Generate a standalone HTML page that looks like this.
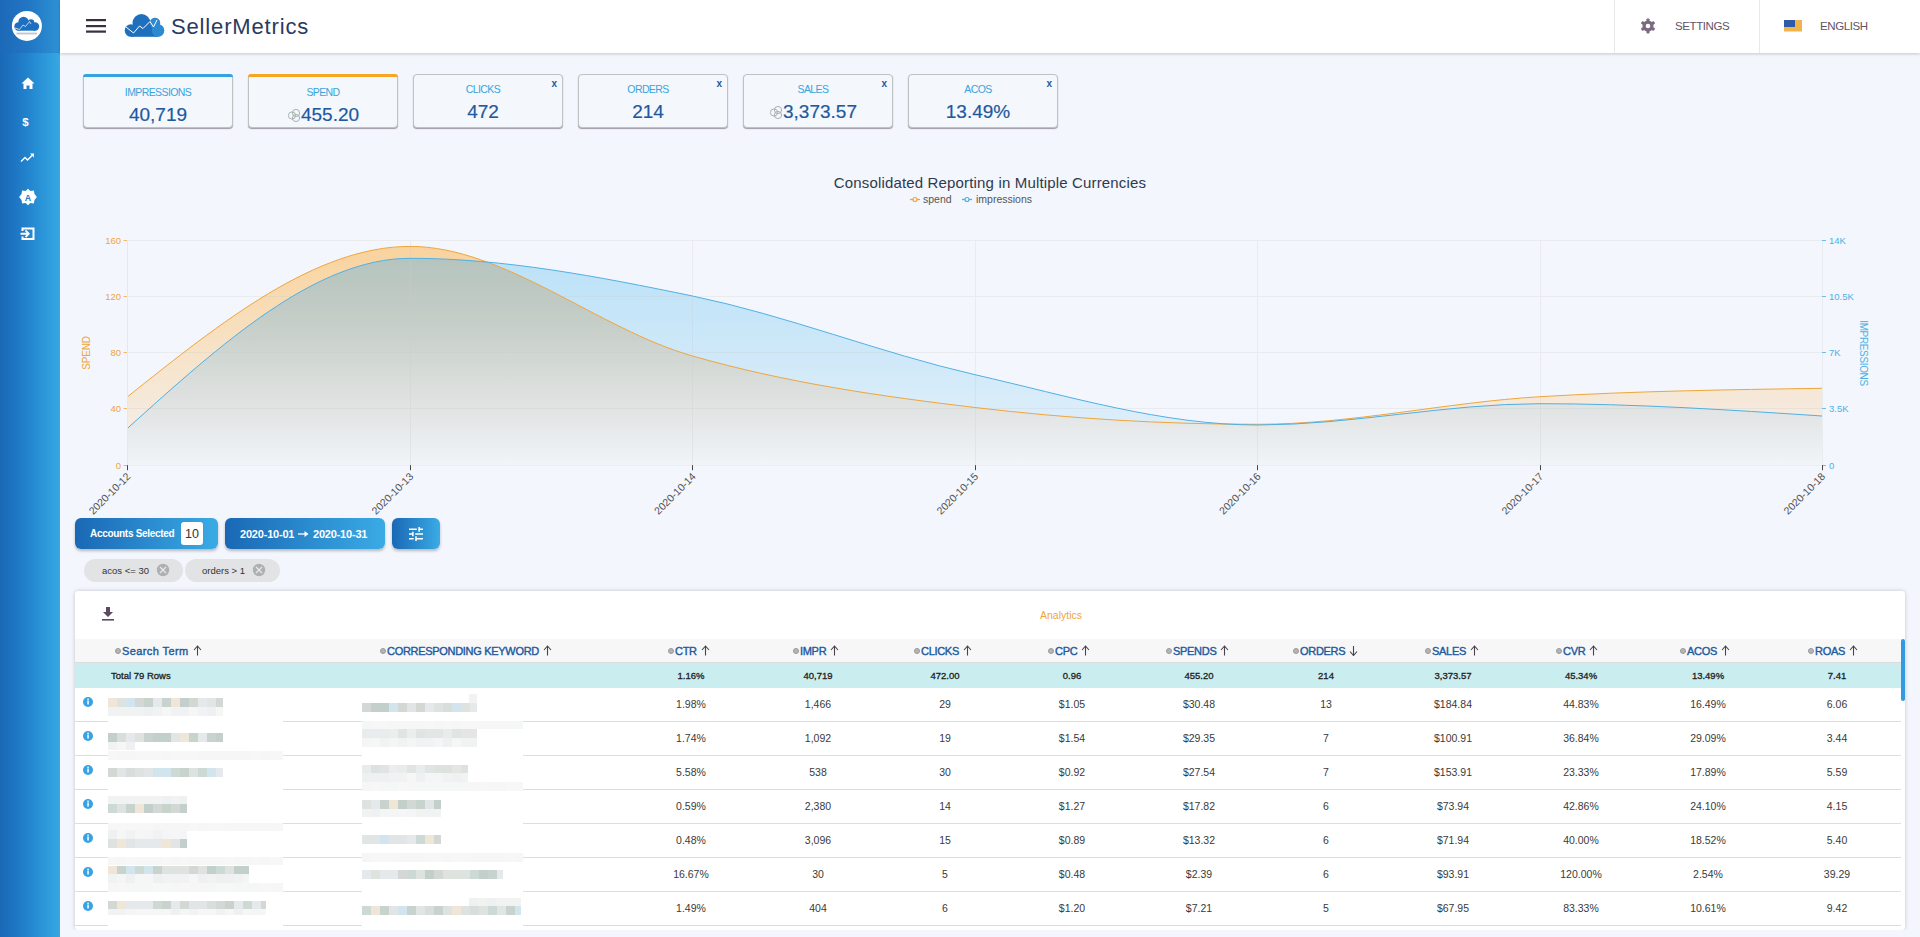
<!DOCTYPE html><html><head><meta charset="utf-8"><style>
*{margin:0;padding:0;box-sizing:border-box}
html,body{width:1920px;height:937px;overflow:hidden}
body{background:#f3f6fd;font-family:"Liberation Sans",sans-serif;position:relative;color:#333}
.abs{position:absolute}
#side{position:absolute;left:0;top:0;width:60px;height:937px;background:linear-gradient(90deg,#1a68b6 0%,#1e76c3 25%,#2386cf 50%,#2c98da 75%,#37a8e2 100%)}
#sidetop{position:absolute;left:0;top:0;width:60px;height:53px;background:linear-gradient(90deg,#1c69b8 0%,#2277c4 50%,#2d92d6 100%)}
#hdr{position:absolute;left:60px;top:0;width:1860px;height:53px;background:#fff;box-shadow:0 1px 3px rgba(0,0,0,0.2)}
.card{position:absolute;top:74px;width:150px;height:54px;background:#f4f7fc;border:1px solid #bcc4c3;border-radius:4px;box-shadow:0 1px 1px rgba(90,80,95,0.55)}
.card .lbl{position:absolute;left:0;right:0;text-align:center;font-size:10.5px;color:#3aa4dc;letter-spacing:-0.6px}
.card .val{position:absolute;left:0;right:0;text-align:center;font-size:19px;color:#1d5a9e;-webkit-text-stroke:0.2px #1d5a9e}
.card .x{position:absolute;right:5px;top:3px;font-size:10px;font-weight:bold;color:#1d5a9e}
.btn{position:absolute;top:518px;height:31px;border-radius:6px;background:linear-gradient(90deg,#1a68b5,#3aabe5);box-shadow:0 2px 3px rgba(0,0,0,0.25);color:#fff}
.chip{position:absolute;top:559px;height:23px;border-radius:12px;background:#e2e3e5;font-size:9.5px;color:#333}
.th{position:absolute;top:645px;font-size:11px;font-weight:normal;color:#1d5a9e;-webkit-text-stroke:0.4px #1d5a9e;white-space:nowrap;letter-spacing:-0.3px}
.td{position:absolute;font-size:10.5px;color:#3a3a3a;text-align:center;width:100px;white-space:nowrap}
.tt{position:absolute;top:670px;font-size:9.5px;font-weight:normal;-webkit-text-stroke:0.3px #222;color:#222;text-align:center;width:100px;white-space:nowrap}
</style></head><body>
<div id="side"></div><div id="sidetop"></div>
<svg class="abs" style="left:0;top:0" width="60" height="53" viewBox="0 0 60 53">
<circle cx="26.9" cy="25.9" r="15" fill="#fff"/>
<g fill="#1e6fbf"><circle cx="18.5" cy="26.5" r="4.2"/><circle cx="23.5" cy="22" r="5.2"/><circle cx="31" cy="22.5" r="3.2"/><circle cx="35" cy="26.5" r="4.2"/><rect x="18.5" y="24" width="16.5" height="6.7"/></g>
<path d="M15,28 L19.5,29.5 L23,25 L25.5,26.5 L29.5,21.5 L31,24" stroke="#fff" stroke-width="0.7" fill="none"/>
<rect x="16.5" y="32.6" width="20.5" height="1.8" fill="#bfc6cb"/>
</svg>
<svg class="abs" style="left:0;top:60px" width="60" height="200" viewBox="0 60 60 200">
<path d="M28,77.5 L21.5,83.5 L23.5,83.5 L23.5,89 L26.5,89 L26.5,85.5 L29.5,85.5 L29.5,89 L32.5,89 L32.5,83.5 L34.5,83.5 Z" fill="#fff"/>
<text x="25.5" y="125.5" font-size="11.5" font-weight="bold" fill="#fff" text-anchor="middle" font-family="Liberation Sans">$</text>
<path d="M20.5,161 L25,156.5 L27.5,159 L31.5,155 L30,153.5 L34,153.5 L34,157.5 L32.5,156 L27.5,161 L25,158.5 L21.5,162 Z" fill="#fff"/>
<g transform="translate(28,197) scale(1.18) translate(-28,-196.5)"><path d="M28,189.5 L30,191.5 L33,191 L33.5,194 L35.5,196.5 L33.5,199 L33,202 L30,201.5 L28,203.5 L26,201.5 L23,202 L22.5,199 L20.5,196.5 L22.5,194 L23,191 L26,191.5 Z" fill="#fff"/>
<text x="28" y="200" font-size="7.5" font-weight="bold" fill="#2178c6" text-anchor="middle" font-family="Liberation Sans">A</text></g>
<path d="M21.5,227.5 L34.5,227.5 L34.5,240 L21.5,240 L21.5,236.5 L23.5,236.5 L23.5,238 L32.5,238 L32.5,229.5 L23.5,229.5 L23.5,231 L21.5,231 Z" fill="#fff"/>
<path d="M20.5,232.8 L26.5,232.8 L24.8,231 L26.2,229.8 L30,233.8 L26.2,237.8 L24.8,236.6 L26.5,234.8 L20.5,234.8 Z" fill="#fff"/>
</svg>
<div id="hdr"></div>
<svg class="abs" style="left:80px;top:10px" width="40" height="32">
<rect x="6" y="9" width="20" height="2.2" fill="#3a2e42"/>
<rect x="6" y="15" width="20" height="2.2" fill="#3a2e42"/>
<rect x="6" y="20.5" width="20" height="2.2" fill="#3a2e42"/>
</svg>
<svg class="abs" style="left:115px;top:5px" width="60" height="40" viewBox="115 5 60 40">
<g fill="#1f6fbd"><circle cx="131" cy="30.5" r="6.3"/><circle cx="141.5" cy="23" r="9"/><circle cx="155" cy="23" r="5.2"/><circle cx="158" cy="30.5" r="6.2"/><rect x="131" y="25" width="27" height="11.8"/></g>
<g fill="#3aa0e0" opacity="0.55"><circle cx="158" cy="30.5" r="6.2"/><circle cx="155" cy="23" r="5.2"/></g>
<path d="M126,27 L133.5,33 L139.5,26 L143,28.5 L150,21.5 L153.5,27 L157,20" stroke="#fff" stroke-width="1" fill="none"/>
</svg>
<div class="abs" style="left:171px;top:14px;font-size:22px;color:#2a3a5e;letter-spacing:0.85px">SellerMetrics</div>
<div class="abs" style="left:1614px;top:0;width:1px;height:53px;background:#e6e8ea"></div>
<div class="abs" style="left:1759px;top:0;width:1px;height:53px;background:#e6e8ea"></div>
<svg class="abs" style="left:1638px;top:16px" width="20" height="20" viewBox="0 0 20 20">
<g fill="#7b6b80"><circle cx="10" cy="10" r="5.5"/>
<rect x="8.5" y="2.5" width="3" height="15" rx="0.8"/>
<rect x="8.5" y="2.5" width="3" height="15" rx="0.8" transform="rotate(60 10 10)"/>
<rect x="8.5" y="2.5" width="3" height="15" rx="0.8" transform="rotate(120 10 10)"/></g>
<circle cx="10" cy="10" r="2.3" fill="#fff"/>
</svg>
<div class="abs" style="left:1675px;top:20px;font-size:11.5px;color:#5f5566;letter-spacing:-0.4px">SETTINGS</div>
<svg class="abs" style="left:1784px;top:19px" width="19" height="14" viewBox="0 0 19 14">
<rect x="0" y="1" width="18" height="11" fill="#f0b54a"/>
<rect x="0" y="1" width="11" height="7" fill="#2d5ba8"/>
<rect x="0" y="10.5" width="18" height="2" fill="#f0b54a"/>
</svg>
<div class="abs" style="left:1820px;top:20px;font-size:11.5px;color:#5f5566;letter-spacing:-0.4px">ENGLISH</div>
<div class="card" style="left:83px">
<div class="abs" style="left:-1px;right:-1px;top:-1px;height:3px;background:#35a3e0;border-radius:3px 3px 0 0"></div>
<div class="lbl" style="top:11px;right:0px">IMPRESSIONS</div>
<div class="val" style="top:29px;right:0px">40,719</div>
</div>
<div class="card" style="left:248px">
<div class="abs" style="left:-1px;right:-1px;top:-1px;height:3px;background:#f5a623;border-radius:3px 3px 0 0"></div>
<div class="lbl" style="top:11px;right:0px">SPEND</div>
<div class="val" style="top:29px;right:0px"><svg width="14" height="14" viewBox="0 0 14 14" style="vertical-align:-1px;margin-right:0px;-webkit-text-stroke:0"><g fill="none" stroke="#a9b2b0" stroke-width="1"><circle cx="5" cy="7.5" r="3.6"/><circle cx="9" cy="5" r="3.6"/><circle cx="9" cy="10" r="3.6"/></g></svg>455.20</div>
</div>
<div class="card" style="left:413px">
<div class="lbl" style="top:8px;right:10px">CLICKS</div>
<div class="val" style="top:26px;right:10px">472</div>
<div class="x">x</div>
</div>
<div class="card" style="left:578px">
<div class="lbl" style="top:8px;right:10px">ORDERS</div>
<div class="val" style="top:26px;right:10px">214</div>
<div class="x">x</div>
</div>
<div class="card" style="left:743px">
<div class="lbl" style="top:8px;right:10px">SALES</div>
<div class="val" style="top:26px;right:10px"><svg width="14" height="14" viewBox="0 0 14 14" style="vertical-align:-1px;margin-right:0px;-webkit-text-stroke:0"><g fill="none" stroke="#a9b2b0" stroke-width="1"><circle cx="5" cy="7.5" r="3.6"/><circle cx="9" cy="5" r="3.6"/><circle cx="9" cy="10" r="3.6"/></g></svg>3,373.57</div>
<div class="x">x</div>
</div>
<div class="card" style="left:908px">
<div class="lbl" style="top:8px;right:10px">ACOS</div>
<div class="val" style="top:26px;right:10px">13.49%</div>
<div class="x">x</div>
</div>
<svg class="abs" style="left:0;top:0" width="1920" height="560" viewBox="0 0 1920 560">
<defs>
<linearGradient id="go" x1="0" y1="240.2" x2="0" y2="465.2" gradientUnits="userSpaceOnUse">
<stop offset="0" stop-color="#f9d29c"/><stop offset="0.5" stop-color="#f7e3c8"/><stop offset="1" stop-color="#f4f1f1"/></linearGradient>
<linearGradient id="gb" x1="0" y1="240.2" x2="0" y2="465.2" gradientUnits="userSpaceOnUse">
<stop offset="0" stop-color="#b8e0f7"/><stop offset="1" stop-color="#e6f1fb"/></linearGradient>
<linearGradient id="gg" x1="0" y1="240.2" x2="0" y2="465.2" gradientUnits="userSpaceOnUse">
<stop offset="0" stop-color="#b2c1bc"/><stop offset="0.35" stop-color="#c5cdc7"/><stop offset="0.75" stop-color="#e1e4e3"/><stop offset="1" stop-color="#f1f4f8"/></linearGradient>
<clipPath id="cb"><path d="M127.2,428.6 C221.5,343.5 315.8,258.3 410.1,258.3 C504.2,258.3 598.4,276.6 692.5,296.0 C786.7,315.4 880.8,353.2 975.0,374.7 C1069.2,396.2 1163.3,425.0 1257.5,425.0 C1351.7,425.0 1445.8,403.7 1540.0,403.7 C1634.0,403.7 1728.0,409.8 1822.0,416.0 L1822,465.2 L127.2,465.2 Z"/></clipPath><clipPath id="cu"><path d="M127.2,428.6 C221.5,343.5 315.8,258.3 410.1,258.3 C504.2,258.3 598.4,276.6 692.5,296.0 C786.7,315.4 880.8,353.2 975.0,374.7 C1069.2,396.2 1163.3,425.0 1257.5,425.0 C1351.7,425.0 1445.8,403.7 1540.0,403.7 C1634.0,403.7 1728.0,409.8 1822.0,416.0 L1822,465.2 L127.2,465.2 Z"/><path d="M127.2,397.0 C221.5,321.7 315.8,246.4 410.1,246.4 C504.2,246.4 598.4,329.2 692.5,356.0 C786.7,382.9 880.8,396.3 975.0,407.5 C1069.2,418.7 1163.3,424.3 1257.5,424.3 C1351.7,424.3 1445.8,402.3 1540.0,396.7 C1634.0,391.1 1728.0,389.7 1822.0,388.3 L1822,465.2 L127.2,465.2 Z"/></clipPath>
</defs>
<g stroke="#e9ebef" stroke-width="1">

<line x1="127" y1="240.5" x2="1822" y2="240.5"/>
<line x1="127" y1="296.5" x2="1822" y2="296.5"/>
<line x1="127" y1="352.5" x2="1822" y2="352.5"/>
<line x1="127" y1="408.5" x2="1822" y2="408.5"/>
<line x1="127" y1="465.5" x2="1822" y2="465.5"/>
<line x1="127.5" y1="240.2" x2="127.5" y2="465.2"/>
<line x1="410.5" y1="240.2" x2="410.5" y2="465.2"/>
<line x1="692.5" y1="240.2" x2="692.5" y2="465.2"/>
<line x1="975.5" y1="240.2" x2="975.5" y2="465.2"/>
<line x1="1257.5" y1="240.2" x2="1257.5" y2="465.2"/>
<line x1="1540.5" y1="240.2" x2="1540.5" y2="465.2"/>
<line x1="1822.5" y1="240.2" x2="1822.5" y2="465.2"/>
</g>
<path d="M127.2,397.0 C221.5,321.7 315.8,246.4 410.1,246.4 C504.2,246.4 598.4,329.2 692.5,356.0 C786.7,382.9 880.8,396.3 975.0,407.5 C1069.2,418.7 1163.3,424.3 1257.5,424.3 C1351.7,424.3 1445.8,402.3 1540.0,396.7 C1634.0,391.1 1728.0,389.7 1822.0,388.3 L1822,465.2 L127.2,465.2 Z" fill="url(#go)"/>
<path d="M127.2,428.6 C221.5,343.5 315.8,258.3 410.1,258.3 C504.2,258.3 598.4,276.6 692.5,296.0 C786.7,315.4 880.8,353.2 975.0,374.7 C1069.2,396.2 1163.3,425.0 1257.5,425.0 C1351.7,425.0 1445.8,403.7 1540.0,403.7 C1634.0,403.7 1728.0,409.8 1822.0,416.0 L1822,465.2 L127.2,465.2 Z" fill="url(#gb)"/>
<path d="M127.2,397.0 C221.5,321.7 315.8,246.4 410.1,246.4 C504.2,246.4 598.4,329.2 692.5,356.0 C786.7,382.9 880.8,396.3 975.0,407.5 C1069.2,418.7 1163.3,424.3 1257.5,424.3 C1351.7,424.3 1445.8,402.3 1540.0,396.7 C1634.0,391.1 1728.0,389.7 1822.0,388.3 L1822,465.2 L127.2,465.2 Z" fill="url(#gg)" clip-path="url(#cb)"/>
<g stroke="#c8ccce" stroke-width="1" opacity="0.3" clip-path="url(#cu)">
<line x1="127" y1="296.5" x2="1822" y2="296.5"/>
<line x1="127" y1="352.5" x2="1822" y2="352.5"/>
<line x1="127" y1="408.5" x2="1822" y2="408.5"/>
<line x1="410.5" y1="240.2" x2="410.5" y2="465.2"/>
<line x1="692.5" y1="240.2" x2="692.5" y2="465.2"/>
<line x1="975.5" y1="240.2" x2="975.5" y2="465.2"/>
<line x1="1257.5" y1="240.2" x2="1257.5" y2="465.2"/>
<line x1="1540.5" y1="240.2" x2="1540.5" y2="465.2"/>
</g>
<path d="M127.2,397.0 C221.5,321.7 315.8,246.4 410.1,246.4 C504.2,246.4 598.4,329.2 692.5,356.0 C786.7,382.9 880.8,396.3 975.0,407.5 C1069.2,418.7 1163.3,424.3 1257.5,424.3 C1351.7,424.3 1445.8,402.3 1540.0,396.7 C1634.0,391.1 1728.0,389.7 1822.0,388.3" fill="none" stroke="#f0a53a" stroke-width="1"/>
<path d="M127.2,428.6 C221.5,343.5 315.8,258.3 410.1,258.3 C504.2,258.3 598.4,276.6 692.5,296.0 C786.7,315.4 880.8,353.2 975.0,374.7 C1069.2,396.2 1163.3,425.0 1257.5,425.0 C1351.7,425.0 1445.8,403.7 1540.0,403.7 C1634.0,403.7 1728.0,409.8 1822.0,416.0" fill="none" stroke="#4fb0e3" stroke-width="1"/>
<line x1="123.5" y1="240.5" x2="127" y2="240.5" stroke="#f3b76a" stroke-width="1"/>
<text x="121" y="243.7" font-size="9.5" fill="#f0a53a" text-anchor="end" font-family="Liberation Sans">160</text>
<line x1="1822" y1="240.5" x2="1826" y2="240.5" stroke="#6cbde8" stroke-width="1"/>
<text x="1829" y="243.7" font-size="9.5" fill="#4fb0e3" font-family="Liberation Sans">14K</text>
<line x1="123.5" y1="296.5" x2="127" y2="296.5" stroke="#f3b76a" stroke-width="1"/>
<text x="121" y="299.9" font-size="9.5" fill="#f0a53a" text-anchor="end" font-family="Liberation Sans">120</text>
<line x1="1822" y1="296.5" x2="1826" y2="296.5" stroke="#6cbde8" stroke-width="1"/>
<text x="1829" y="299.9" font-size="9.5" fill="#4fb0e3" font-family="Liberation Sans">10.5K</text>
<line x1="123.5" y1="352.5" x2="127" y2="352.5" stroke="#f3b76a" stroke-width="1"/>
<text x="121" y="356.2" font-size="9.5" fill="#f0a53a" text-anchor="end" font-family="Liberation Sans">80</text>
<line x1="1822" y1="352.5" x2="1826" y2="352.5" stroke="#6cbde8" stroke-width="1"/>
<text x="1829" y="356.2" font-size="9.5" fill="#4fb0e3" font-family="Liberation Sans">7K</text>
<line x1="123.5" y1="408.5" x2="127" y2="408.5" stroke="#f3b76a" stroke-width="1"/>
<text x="121" y="412.4" font-size="9.5" fill="#f0a53a" text-anchor="end" font-family="Liberation Sans">40</text>
<line x1="1822" y1="408.5" x2="1826" y2="408.5" stroke="#6cbde8" stroke-width="1"/>
<text x="1829" y="412.4" font-size="9.5" fill="#4fb0e3" font-family="Liberation Sans">3.5K</text>
<line x1="123.5" y1="465.5" x2="127" y2="465.5" stroke="#f3b76a" stroke-width="1"/>
<text x="121" y="468.7" font-size="9.5" fill="#f0a53a" text-anchor="end" font-family="Liberation Sans">0</text>
<line x1="1822" y1="465.5" x2="1826" y2="465.5" stroke="#6cbde8" stroke-width="1"/>
<text x="1829" y="468.7" font-size="9.5" fill="#4fb0e3" font-family="Liberation Sans">0</text>
<line x1="127.5" y1="240.2" x2="127.5" y2="465.2" stroke="#e6e8ec"/>
<line x1="127.5" y1="465.2" x2="127.5" y2="470.2" stroke="#444" stroke-width="1"/>
<text transform="translate(131.2,477.2) rotate(-45)" font-size="10.5" fill="#505050" text-anchor="end" font-family="Liberation Sans">2020-10-12</text>
<line x1="410.5" y1="465.2" x2="410.5" y2="470.2" stroke="#444" stroke-width="1"/>
<text transform="translate(414.1,477.2) rotate(-45)" font-size="10.5" fill="#505050" text-anchor="end" font-family="Liberation Sans">2020-10-13</text>
<line x1="692.5" y1="465.2" x2="692.5" y2="470.2" stroke="#444" stroke-width="1"/>
<text transform="translate(696.5,477.2) rotate(-45)" font-size="10.5" fill="#505050" text-anchor="end" font-family="Liberation Sans">2020-10-14</text>
<line x1="975.5" y1="465.2" x2="975.5" y2="470.2" stroke="#444" stroke-width="1"/>
<text transform="translate(979,477.2) rotate(-45)" font-size="10.5" fill="#505050" text-anchor="end" font-family="Liberation Sans">2020-10-15</text>
<line x1="1257.5" y1="465.2" x2="1257.5" y2="470.2" stroke="#444" stroke-width="1"/>
<text transform="translate(1261.5,477.2) rotate(-45)" font-size="10.5" fill="#505050" text-anchor="end" font-family="Liberation Sans">2020-10-16</text>
<line x1="1540.5" y1="465.2" x2="1540.5" y2="470.2" stroke="#444" stroke-width="1"/>
<text transform="translate(1544,477.2) rotate(-45)" font-size="10.5" fill="#505050" text-anchor="end" font-family="Liberation Sans">2020-10-17</text>
<line x1="1822.5" y1="465.2" x2="1822.5" y2="470.2" stroke="#444" stroke-width="1"/>
<text transform="translate(1826,477.2) rotate(-45)" font-size="10.5" fill="#505050" text-anchor="end" font-family="Liberation Sans">2020-10-18</text>
<text transform="translate(90,353) rotate(-90)" font-size="10" letter-spacing="-0.2" fill="#f0a53a" text-anchor="middle" font-family="Liberation Sans">SPEND</text>
<text transform="translate(1860,353) rotate(90)" font-size="10" letter-spacing="-0.35" fill="#4fb0e3" text-anchor="middle" font-family="Liberation Sans">IMPRESSIONS</text>
<text x="990" y="188" font-size="15" letter-spacing="0.16" fill="#2f3a4c" text-anchor="middle" font-family="Liberation Sans">Consolidated Reporting in Multiple Currencies</text>
<line x1="910" y1="199.5" x2="920" y2="199.5" stroke="#f0a53a" stroke-width="1.3"/><circle cx="915" cy="199.5" r="2" fill="#f3f6fd" stroke="#f0a53a" stroke-width="1.2"/>
<text x="923" y="203" font-size="10.5" fill="#555" font-family="Liberation Sans">spend</text>
<line x1="962" y1="199.5" x2="972" y2="199.5" stroke="#4fb0e3" stroke-width="1.3"/><circle cx="967" cy="199.5" r="2" fill="#f3f6fd" stroke="#4fb0e3" stroke-width="1.2"/>
<text x="976" y="203" font-size="10.5" fill="#555" font-family="Liberation Sans">impressions</text>
</svg>
<div class="btn" style="left:75px;width:143px"><div class="abs" style="left:15px;top:10px;font-size:10px;font-weight:bold;letter-spacing:-0.3px">Accounts Selected</div><div class="abs" style="left:181px;"></div><div class="abs" style="left:106px;top:4px;width:22px;height:23px;padding-top:1px;background:#fff;border-radius:3px;color:#333;font-size:12.5px;text-align:center;line-height:23px">10</div></div>
<div class="btn" style="left:225px;width:160px"><div class="abs" style="left:15px;top:10px;font-size:11px;font-weight:bold;white-space:nowrap;letter-spacing:-0.2px">2020-10-01 <svg width="11" height="8" viewBox="0 0 11 8" style="vertical-align:0px;margin:0 1px"><path d="M0,4 L9,4" stroke="#fff" stroke-width="1.3"/><path d="M6.5,1 L10.5,4 L6.5,7 Z" fill="#fff"/></svg> 2020-10-31</div></div>
<div class="btn" style="left:392px;width:48px"><svg class="abs" style="left:17px;top:8.5px" width="14" height="14" viewBox="3 3 18 18"><path fill="#fff" d="M3 17v2h6v-2H3zM3 5v2h10V5H3zm10 16v-2h8v-2h-8v-2h-2v6h2zM7 9v2H3v2h4v2h2V9H7zm14 4v-2H11v2h10zm-6-4h2V7h4V5h-4V3h-2v6z"/></svg></div>
<div class="chip" style="left:84px;width:99px"><div class="abs" style="left:18px;top:6px">acos &lt;= 30</div><svg class="abs" style="left:71px;top:3px" width="16" height="16" viewBox="0 0 16 16"><circle cx="8" cy="8" r="6.2" fill="#b0b0b3"/><g stroke="#e8e8ea" stroke-width="1.2"><line x1="5" y1="5" x2="11" y2="11"/><line x1="11" y1="5" x2="5" y2="11"/></g></svg></div>
<div class="chip" style="left:185px;width:95px"><div class="abs" style="left:17px;top:6px">orders &gt; 1</div><svg class="abs" style="left:66px;top:3px" width="16" height="16" viewBox="0 0 16 16"><circle cx="8" cy="8" r="6.2" fill="#b0b0b3"/><g stroke="#e8e8ea" stroke-width="1.2"><line x1="5" y1="5" x2="11" y2="11"/><line x1="11" y1="5" x2="5" y2="11"/></g></svg></div>
<div class="abs" style="left:75px;top:591px;width:1830px;height:339px;background:#fff;box-shadow:0 0 4px rgba(0,0,0,0.2);border-radius:3px"></div>
<svg class="abs" style="left:101px;top:606px" width="14" height="16" viewBox="0 0 14 16"><path d="M5,1 L9,1 L9,6 L12,6 L7,11 L2,6 L5,6 Z" fill="#5a4a62"/><rect x="1" y="13" width="12" height="1.6" fill="#5a4a62"/></svg>
<div class="abs" style="left:1000px;top:609px;width:122px;text-align:center;font-size:10.5px;color:#f0a53a">Analytics</div>
<div class="abs" style="left:75px;top:639px;width:1826px;height:24px;background:#f7f7f8;border-bottom:1px solid #dcdddf"></div>
<div class="abs" style="left:75px;top:663px;width:1826px;height:25px;background:#caedef"></div>
<div class="abs" style="left:1901px;top:639px;width:4px;height:62px;background:#3399e0;border-radius:2px"></div>
<div class="th" style="left:115px;letter-spacing:0.4px;"><span style="display:inline-block;width:6px;height:6px;border-radius:3px;background:#b5b5b5;border:1px solid #999;-webkit-text-stroke:0;margin-right:1px;vertical-align:1px"></span>Search Term<svg width="9" height="11" viewBox="0 0 9 11" style="vertical-align:-1px;margin-left:4px"><g stroke="#4a4050" stroke-width="1.1" fill="none"><path d="M4.5,10.5 L4.5,1 M1,5 L4.5,1 L8,5"/></g></svg></div>
<div class="th" style="left:380px;"><span style="display:inline-block;width:6px;height:6px;border-radius:3px;background:#b5b5b5;border:1px solid #999;-webkit-text-stroke:0;margin-right:1px;vertical-align:1px"></span>CORRESPONDING KEYWORD<svg width="9" height="11" viewBox="0 0 9 11" style="vertical-align:-1px;margin-left:4px"><g stroke="#4a4050" stroke-width="1.1" fill="none"><path d="M4.5,10.5 L4.5,1 M1,5 L4.5,1 L8,5"/></g></svg></div>
<div class="th" style="left:668px;"><span style="display:inline-block;width:6px;height:6px;border-radius:3px;background:#b5b5b5;border:1px solid #999;-webkit-text-stroke:0;margin-right:1px;vertical-align:1px"></span>CTR<svg width="9" height="11" viewBox="0 0 9 11" style="vertical-align:-1px;margin-left:4px"><g stroke="#4a4050" stroke-width="1.1" fill="none"><path d="M4.5,10.5 L4.5,1 M1,5 L4.5,1 L8,5"/></g></svg></div>
<div class="th" style="left:793px;"><span style="display:inline-block;width:6px;height:6px;border-radius:3px;background:#b5b5b5;border:1px solid #999;-webkit-text-stroke:0;margin-right:1px;vertical-align:1px"></span>IMPR<svg width="9" height="11" viewBox="0 0 9 11" style="vertical-align:-1px;margin-left:4px"><g stroke="#4a4050" stroke-width="1.1" fill="none"><path d="M4.5,10.5 L4.5,1 M1,5 L4.5,1 L8,5"/></g></svg></div>
<div class="th" style="left:914px;"><span style="display:inline-block;width:6px;height:6px;border-radius:3px;background:#b5b5b5;border:1px solid #999;-webkit-text-stroke:0;margin-right:1px;vertical-align:1px"></span>CLICKS<svg width="9" height="11" viewBox="0 0 9 11" style="vertical-align:-1px;margin-left:4px"><g stroke="#4a4050" stroke-width="1.1" fill="none"><path d="M4.5,10.5 L4.5,1 M1,5 L4.5,1 L8,5"/></g></svg></div>
<div class="th" style="left:1048px;"><span style="display:inline-block;width:6px;height:6px;border-radius:3px;background:#b5b5b5;border:1px solid #999;-webkit-text-stroke:0;margin-right:1px;vertical-align:1px"></span>CPC<svg width="9" height="11" viewBox="0 0 9 11" style="vertical-align:-1px;margin-left:4px"><g stroke="#4a4050" stroke-width="1.1" fill="none"><path d="M4.5,10.5 L4.5,1 M1,5 L4.5,1 L8,5"/></g></svg></div>
<div class="th" style="left:1166px;"><span style="display:inline-block;width:6px;height:6px;border-radius:3px;background:#b5b5b5;border:1px solid #999;-webkit-text-stroke:0;margin-right:1px;vertical-align:1px"></span>SPENDS<svg width="9" height="11" viewBox="0 0 9 11" style="vertical-align:-1px;margin-left:4px"><g stroke="#4a4050" stroke-width="1.1" fill="none"><path d="M4.5,10.5 L4.5,1 M1,5 L4.5,1 L8,5"/></g></svg></div>
<div class="th" style="left:1293px;"><span style="display:inline-block;width:6px;height:6px;border-radius:3px;background:#b5b5b5;border:1px solid #999;-webkit-text-stroke:0;margin-right:1px;vertical-align:1px"></span>ORDERS<svg width="9" height="11" viewBox="0 0 9 11" style="vertical-align:-1px;margin-left:4px"><g stroke="#4a4050" stroke-width="1.1" fill="none"><path d="M4.5,1 L4.5,10.5 M1,6.5 L4.5,10.5 L8,6.5"/></g></svg></div>
<div class="th" style="left:1425px;"><span style="display:inline-block;width:6px;height:6px;border-radius:3px;background:#b5b5b5;border:1px solid #999;-webkit-text-stroke:0;margin-right:1px;vertical-align:1px"></span>SALES<svg width="9" height="11" viewBox="0 0 9 11" style="vertical-align:-1px;margin-left:4px"><g stroke="#4a4050" stroke-width="1.1" fill="none"><path d="M4.5,10.5 L4.5,1 M1,5 L4.5,1 L8,5"/></g></svg></div>
<div class="th" style="left:1556px;"><span style="display:inline-block;width:6px;height:6px;border-radius:3px;background:#b5b5b5;border:1px solid #999;-webkit-text-stroke:0;margin-right:1px;vertical-align:1px"></span>CVR<svg width="9" height="11" viewBox="0 0 9 11" style="vertical-align:-1px;margin-left:4px"><g stroke="#4a4050" stroke-width="1.1" fill="none"><path d="M4.5,10.5 L4.5,1 M1,5 L4.5,1 L8,5"/></g></svg></div>
<div class="th" style="left:1680px;"><span style="display:inline-block;width:6px;height:6px;border-radius:3px;background:#b5b5b5;border:1px solid #999;-webkit-text-stroke:0;margin-right:1px;vertical-align:1px"></span>ACOS<svg width="9" height="11" viewBox="0 0 9 11" style="vertical-align:-1px;margin-left:4px"><g stroke="#4a4050" stroke-width="1.1" fill="none"><path d="M4.5,10.5 L4.5,1 M1,5 L4.5,1 L8,5"/></g></svg></div>
<div class="th" style="left:1808px;"><span style="display:inline-block;width:6px;height:6px;border-radius:3px;background:#b5b5b5;border:1px solid #999;-webkit-text-stroke:0;margin-right:1px;vertical-align:1px"></span>ROAS<svg width="9" height="11" viewBox="0 0 9 11" style="vertical-align:-1px;margin-left:4px"><g stroke="#4a4050" stroke-width="1.1" fill="none"><path d="M4.5,10.5 L4.5,1 M1,5 L4.5,1 L8,5"/></g></svg></div>
<div class="abs" style="left:111px;top:670px;font-size:9.5px;font-weight:normal;-webkit-text-stroke:0.3px #222;color:#222">Total 79 Rows</div>
<div class="tt" style="left:641px">1.16%</div>
<div class="tt" style="left:768px">40,719</div>
<div class="tt" style="left:895px">472.00</div>
<div class="tt" style="left:1022px">0.96</div>
<div class="tt" style="left:1149px">455.20</div>
<div class="tt" style="left:1276px">214</div>
<div class="tt" style="left:1403px">3,373.57</div>
<div class="tt" style="left:1531px">45.34%</div>
<div class="tt" style="left:1658px">13.49%</div>
<div class="tt" style="left:1787px">7.41</div>
<div class="abs" style="left:75px;top:721px;width:1826px;height:1px;background:#dcdee0"></div>
<svg class="abs" style="left:82px;top:696px" width="12" height="12" viewBox="0 0 12 12"><circle cx="6" cy="6" r="5" fill="#38a2e4"/><rect x="5.3" y="4.5" width="1.5" height="4" fill="#fff"/><rect x="5.3" y="2.6" width="1.5" height="1.3" fill="#fff"/></svg>
<div class="td" style="left:641px;top:698px">1.98%</div>
<div class="td" style="left:768px;top:698px">1,466</div>
<div class="td" style="left:895px;top:698px">29</div>
<div class="td" style="left:1022px;top:698px">$1.05</div>
<div class="td" style="left:1149px;top:698px">$30.48</div>
<div class="td" style="left:1276px;top:698px">13</div>
<div class="td" style="left:1403px;top:698px">$184.84</div>
<div class="td" style="left:1531px;top:698px">44.83%</div>
<div class="td" style="left:1658px;top:698px">16.49%</div>
<div class="td" style="left:1787px;top:698px">6.06</div>
<div class="abs" style="left:75px;top:755px;width:1826px;height:1px;background:#dcdee0"></div>
<svg class="abs" style="left:82px;top:730px" width="12" height="12" viewBox="0 0 12 12"><circle cx="6" cy="6" r="5" fill="#38a2e4"/><rect x="5.3" y="4.5" width="1.5" height="4" fill="#fff"/><rect x="5.3" y="2.6" width="1.5" height="1.3" fill="#fff"/></svg>
<div class="td" style="left:641px;top:732px">1.74%</div>
<div class="td" style="left:768px;top:732px">1,092</div>
<div class="td" style="left:895px;top:732px">19</div>
<div class="td" style="left:1022px;top:732px">$1.54</div>
<div class="td" style="left:1149px;top:732px">$29.35</div>
<div class="td" style="left:1276px;top:732px">7</div>
<div class="td" style="left:1403px;top:732px">$100.91</div>
<div class="td" style="left:1531px;top:732px">36.84%</div>
<div class="td" style="left:1658px;top:732px">29.09%</div>
<div class="td" style="left:1787px;top:732px">3.44</div>
<div class="abs" style="left:75px;top:789px;width:1826px;height:1px;background:#dcdee0"></div>
<svg class="abs" style="left:82px;top:764px" width="12" height="12" viewBox="0 0 12 12"><circle cx="6" cy="6" r="5" fill="#38a2e4"/><rect x="5.3" y="4.5" width="1.5" height="4" fill="#fff"/><rect x="5.3" y="2.6" width="1.5" height="1.3" fill="#fff"/></svg>
<div class="td" style="left:641px;top:766px">5.58%</div>
<div class="td" style="left:768px;top:766px">538</div>
<div class="td" style="left:895px;top:766px">30</div>
<div class="td" style="left:1022px;top:766px">$0.92</div>
<div class="td" style="left:1149px;top:766px">$27.54</div>
<div class="td" style="left:1276px;top:766px">7</div>
<div class="td" style="left:1403px;top:766px">$153.91</div>
<div class="td" style="left:1531px;top:766px">23.33%</div>
<div class="td" style="left:1658px;top:766px">17.89%</div>
<div class="td" style="left:1787px;top:766px">5.59</div>
<div class="abs" style="left:75px;top:823px;width:1826px;height:1px;background:#dcdee0"></div>
<svg class="abs" style="left:82px;top:798px" width="12" height="12" viewBox="0 0 12 12"><circle cx="6" cy="6" r="5" fill="#38a2e4"/><rect x="5.3" y="4.5" width="1.5" height="4" fill="#fff"/><rect x="5.3" y="2.6" width="1.5" height="1.3" fill="#fff"/></svg>
<div class="td" style="left:641px;top:800px">0.59%</div>
<div class="td" style="left:768px;top:800px">2,380</div>
<div class="td" style="left:895px;top:800px">14</div>
<div class="td" style="left:1022px;top:800px">$1.27</div>
<div class="td" style="left:1149px;top:800px">$17.82</div>
<div class="td" style="left:1276px;top:800px">6</div>
<div class="td" style="left:1403px;top:800px">$73.94</div>
<div class="td" style="left:1531px;top:800px">42.86%</div>
<div class="td" style="left:1658px;top:800px">24.10%</div>
<div class="td" style="left:1787px;top:800px">4.15</div>
<div class="abs" style="left:75px;top:857px;width:1826px;height:1px;background:#dcdee0"></div>
<svg class="abs" style="left:82px;top:832px" width="12" height="12" viewBox="0 0 12 12"><circle cx="6" cy="6" r="5" fill="#38a2e4"/><rect x="5.3" y="4.5" width="1.5" height="4" fill="#fff"/><rect x="5.3" y="2.6" width="1.5" height="1.3" fill="#fff"/></svg>
<div class="td" style="left:641px;top:834px">0.48%</div>
<div class="td" style="left:768px;top:834px">3,096</div>
<div class="td" style="left:895px;top:834px">15</div>
<div class="td" style="left:1022px;top:834px">$0.89</div>
<div class="td" style="left:1149px;top:834px">$13.32</div>
<div class="td" style="left:1276px;top:834px">6</div>
<div class="td" style="left:1403px;top:834px">$71.94</div>
<div class="td" style="left:1531px;top:834px">40.00%</div>
<div class="td" style="left:1658px;top:834px">18.52%</div>
<div class="td" style="left:1787px;top:834px">5.40</div>
<div class="abs" style="left:75px;top:891px;width:1826px;height:1px;background:#dcdee0"></div>
<svg class="abs" style="left:82px;top:866px" width="12" height="12" viewBox="0 0 12 12"><circle cx="6" cy="6" r="5" fill="#38a2e4"/><rect x="5.3" y="4.5" width="1.5" height="4" fill="#fff"/><rect x="5.3" y="2.6" width="1.5" height="1.3" fill="#fff"/></svg>
<div class="td" style="left:641px;top:868px">16.67%</div>
<div class="td" style="left:768px;top:868px">30</div>
<div class="td" style="left:895px;top:868px">5</div>
<div class="td" style="left:1022px;top:868px">$0.48</div>
<div class="td" style="left:1149px;top:868px">$2.39</div>
<div class="td" style="left:1276px;top:868px">6</div>
<div class="td" style="left:1403px;top:868px">$93.91</div>
<div class="td" style="left:1531px;top:868px">120.00%</div>
<div class="td" style="left:1658px;top:868px">2.54%</div>
<div class="td" style="left:1787px;top:868px">39.29</div>
<div class="abs" style="left:75px;top:925px;width:1826px;height:1px;background:#dcdee0"></div>
<svg class="abs" style="left:82px;top:900px" width="12" height="12" viewBox="0 0 12 12"><circle cx="6" cy="6" r="5" fill="#38a2e4"/><rect x="5.3" y="4.5" width="1.5" height="4" fill="#fff"/><rect x="5.3" y="2.6" width="1.5" height="1.3" fill="#fff"/></svg>
<div class="td" style="left:641px;top:902px">1.49%</div>
<div class="td" style="left:768px;top:902px">404</div>
<div class="td" style="left:895px;top:902px">6</div>
<div class="td" style="left:1022px;top:902px">$1.20</div>
<div class="td" style="left:1149px;top:902px">$7.21</div>
<div class="td" style="left:1276px;top:902px">5</div>
<div class="td" style="left:1403px;top:902px">$67.95</div>
<div class="td" style="left:1531px;top:902px">83.33%</div>
<div class="td" style="left:1658px;top:902px">10.61%</div>
<div class="td" style="left:1787px;top:902px">9.42</div>
<div class="abs" style="left:108px;top:720px;width:175px;height:3px;background:#fff"></div>
<div class="abs" style="left:362px;top:720px;width:161px;height:3px;background:#fff"></div>
<div class="abs" style="left:108px;top:754px;width:175px;height:3px;background:#fff"></div>
<div class="abs" style="left:362px;top:754px;width:161px;height:3px;background:#fff"></div>
<div class="abs" style="left:108px;top:788px;width:175px;height:3px;background:#fff"></div>
<div class="abs" style="left:362px;top:788px;width:161px;height:3px;background:#fff"></div>
<div class="abs" style="left:108px;top:822px;width:175px;height:3px;background:#fff"></div>
<div class="abs" style="left:362px;top:822px;width:161px;height:3px;background:#fff"></div>
<div class="abs" style="left:108px;top:856px;width:175px;height:3px;background:#fff"></div>
<div class="abs" style="left:362px;top:856px;width:161px;height:3px;background:#fff"></div>
<div class="abs" style="left:108px;top:890px;width:175px;height:3px;background:#fff"></div>
<div class="abs" style="left:362px;top:890px;width:161px;height:3px;background:#fff"></div>
<div class="abs" style="left:108px;top:924px;width:175px;height:3px;background:#fff"></div>
<div class="abs" style="left:362px;top:924px;width:161px;height:3px;background:#fff"></div>
<div class="abs" style="left:108px;top:698px;width:9px;height:9px;background:#efe6d8"></div>
<div class="abs" style="left:117px;top:698px;width:9px;height:9px;background:#dfe3e0"></div>
<div class="abs" style="left:126px;top:698px;width:9px;height:9px;background:#d2e4ee"></div>
<div class="abs" style="left:135px;top:698px;width:9px;height:9px;background:#d3d8d4"></div>
<div class="abs" style="left:144px;top:698px;width:9px;height:9px;background:#c9d3cd"></div>
<div class="abs" style="left:153px;top:698px;width:9px;height:9px;background:#e6e9eb"></div>
<div class="abs" style="left:162px;top:698px;width:9px;height:9px;background:#c9d3cd"></div>
<div class="abs" style="left:171px;top:698px;width:9px;height:9px;background:#efe6d8"></div>
<div class="abs" style="left:180px;top:698px;width:9px;height:9px;background:#c3cfca"></div>
<div class="abs" style="left:189px;top:698px;width:9px;height:9px;background:#d3d8d4"></div>
<div class="abs" style="left:198px;top:698px;width:9px;height:9px;background:#e6e9eb"></div>
<div class="abs" style="left:207px;top:698px;width:9px;height:9px;background:#e2e5e6"></div>
<div class="abs" style="left:216px;top:698px;width:7px;height:9px;background:#d3d8d4"></div>
<div class="abs" style="left:108px;top:707px;width:9px;height:9px;background:#f0f2f3"></div>
<div class="abs" style="left:117px;top:707px;width:9px;height:9px;background:#f1f3f3"></div>
<div class="abs" style="left:126px;top:707px;width:9px;height:9px;background:#f1f3f3"></div>
<div class="abs" style="left:135px;top:707px;width:9px;height:9px;background:#f0f2f3"></div>
<div class="abs" style="left:144px;top:707px;width:9px;height:9px;background:#eef0f2"></div>
<div class="abs" style="left:153px;top:707px;width:9px;height:9px;background:#f0f2f3"></div>
<div class="abs" style="left:162px;top:707px;width:9px;height:9px;background:#f6f6f7"></div>
<div class="abs" style="left:171px;top:707px;width:9px;height:9px;background:#f1f3f3"></div>
<div class="abs" style="left:180px;top:707px;width:9px;height:9px;background:#f0f2f3"></div>
<div class="abs" style="left:189px;top:707px;width:9px;height:9px;background:#f6f6f7"></div>
<div class="abs" style="left:198px;top:707px;width:9px;height:9px;background:#f0f2f3"></div>
<div class="abs" style="left:207px;top:707px;width:9px;height:9px;background:#eef0f2"></div>
<div class="abs" style="left:216px;top:707px;width:7px;height:9px;background:#f6f6f7"></div>
<div class="abs" style="left:362px;top:703px;width:9px;height:9px;background:#d3d8d4"></div>
<div class="abs" style="left:371px;top:703px;width:9px;height:9px;background:#c3cfca"></div>
<div class="abs" style="left:380px;top:703px;width:9px;height:9px;background:#c3cfca"></div>
<div class="abs" style="left:389px;top:703px;width:9px;height:9px;background:#d2e4ee"></div>
<div class="abs" style="left:398px;top:703px;width:9px;height:9px;background:#d3d8d4"></div>
<div class="abs" style="left:407px;top:703px;width:9px;height:9px;background:#e2e5e6"></div>
<div class="abs" style="left:416px;top:703px;width:9px;height:9px;background:#d3d8d4"></div>
<div class="abs" style="left:425px;top:703px;width:9px;height:9px;background:#e6e9eb"></div>
<div class="abs" style="left:434px;top:703px;width:9px;height:9px;background:#dfe3e0"></div>
<div class="abs" style="left:443px;top:703px;width:9px;height:9px;background:#d8dedb"></div>
<div class="abs" style="left:452px;top:703px;width:9px;height:9px;background:#d2e4ee"></div>
<div class="abs" style="left:461px;top:703px;width:9px;height:9px;background:#dfe3e0"></div>
<div class="abs" style="left:470px;top:703px;width:7px;height:9px;background:#e6e9eb"></div>
<div class="abs" style="left:469px;top:694px;width:8px;height:9px;background:#f0f2f3"></div>
<div class="abs" style="left:108px;top:733px;width:9px;height:9px;background:#c3cfca"></div>
<div class="abs" style="left:117px;top:733px;width:9px;height:9px;background:#d8dedb"></div>
<div class="abs" style="left:126px;top:733px;width:9px;height:9px;background:#e6e9eb"></div>
<div class="abs" style="left:135px;top:733px;width:9px;height:9px;background:#dfe3e0"></div>
<div class="abs" style="left:144px;top:733px;width:9px;height:9px;background:#c9d3cd"></div>
<div class="abs" style="left:153px;top:733px;width:9px;height:9px;background:#c3cfca"></div>
<div class="abs" style="left:162px;top:733px;width:9px;height:9px;background:#c3cfca"></div>
<div class="abs" style="left:171px;top:733px;width:9px;height:9px;background:#e2e5e6"></div>
<div class="abs" style="left:180px;top:733px;width:9px;height:9px;background:#efe6d8"></div>
<div class="abs" style="left:189px;top:733px;width:9px;height:9px;background:#c9d3cd"></div>
<div class="abs" style="left:198px;top:733px;width:9px;height:9px;background:#e6e9eb"></div>
<div class="abs" style="left:207px;top:733px;width:9px;height:9px;background:#c9d3cd"></div>
<div class="abs" style="left:216px;top:733px;width:7px;height:9px;background:#c3cfca"></div>
<div class="abs" style="left:108px;top:742px;width:9px;height:8px;background:#f0f2f3"></div>
<div class="abs" style="left:117px;top:742px;width:9px;height:8px;background:#f6f6f7"></div>
<div class="abs" style="left:126px;top:742px;width:9px;height:8px;background:#eef0f2"></div>
<div class="abs" style="left:108px;top:751px;width:9px;height:9px;background:#f7f7f8"></div>
<div class="abs" style="left:117px;top:751px;width:9px;height:9px;background:#f5f6f6"></div>
<div class="abs" style="left:126px;top:751px;width:9px;height:9px;background:#f5f6f6"></div>
<div class="abs" style="left:135px;top:751px;width:9px;height:9px;background:#f7f7f8"></div>
<div class="abs" style="left:144px;top:751px;width:9px;height:9px;background:#f7f7f8"></div>
<div class="abs" style="left:153px;top:751px;width:9px;height:9px;background:#f7f7f8"></div>
<div class="abs" style="left:162px;top:751px;width:9px;height:9px;background:#f5f6f6"></div>
<div class="abs" style="left:171px;top:751px;width:9px;height:9px;background:#f7f7f8"></div>
<div class="abs" style="left:180px;top:751px;width:9px;height:9px;background:#f7f7f8"></div>
<div class="abs" style="left:189px;top:751px;width:9px;height:9px;background:#f7f7f8"></div>
<div class="abs" style="left:198px;top:751px;width:9px;height:9px;background:#f6f6f7"></div>
<div class="abs" style="left:207px;top:751px;width:9px;height:9px;background:#f6f6f7"></div>
<div class="abs" style="left:216px;top:751px;width:9px;height:9px;background:#f5f6f6"></div>
<div class="abs" style="left:225px;top:751px;width:9px;height:9px;background:#f6f6f7"></div>
<div class="abs" style="left:234px;top:751px;width:9px;height:9px;background:#f6f6f7"></div>
<div class="abs" style="left:243px;top:751px;width:9px;height:9px;background:#f5f6f6"></div>
<div class="abs" style="left:252px;top:751px;width:9px;height:9px;background:#f7f7f8"></div>
<div class="abs" style="left:261px;top:751px;width:9px;height:9px;background:#f5f6f6"></div>
<div class="abs" style="left:270px;top:751px;width:9px;height:9px;background:#f7f7f8"></div>
<div class="abs" style="left:279px;top:751px;width:4px;height:9px;background:#f7f7f8"></div>
<div class="abs" style="left:362px;top:721px;width:9px;height:8px;background:#f5f6f6"></div>
<div class="abs" style="left:371px;top:721px;width:9px;height:8px;background:#f7f7f8"></div>
<div class="abs" style="left:380px;top:721px;width:9px;height:8px;background:#f7f7f8"></div>
<div class="abs" style="left:389px;top:721px;width:9px;height:8px;background:#f5f6f6"></div>
<div class="abs" style="left:398px;top:721px;width:9px;height:8px;background:#f6f6f7"></div>
<div class="abs" style="left:407px;top:721px;width:9px;height:8px;background:#f6f6f7"></div>
<div class="abs" style="left:416px;top:721px;width:9px;height:8px;background:#f5f6f6"></div>
<div class="abs" style="left:425px;top:721px;width:9px;height:8px;background:#f7f7f8"></div>
<div class="abs" style="left:434px;top:721px;width:9px;height:8px;background:#f6f6f7"></div>
<div class="abs" style="left:443px;top:721px;width:9px;height:8px;background:#f7f7f8"></div>
<div class="abs" style="left:452px;top:721px;width:9px;height:8px;background:#f6f6f7"></div>
<div class="abs" style="left:461px;top:721px;width:9px;height:8px;background:#f7f7f8"></div>
<div class="abs" style="left:470px;top:721px;width:9px;height:8px;background:#f7f7f8"></div>
<div class="abs" style="left:479px;top:721px;width:9px;height:8px;background:#f6f6f7"></div>
<div class="abs" style="left:488px;top:721px;width:9px;height:8px;background:#f5f6f6"></div>
<div class="abs" style="left:497px;top:721px;width:9px;height:8px;background:#f6f6f7"></div>
<div class="abs" style="left:506px;top:721px;width:9px;height:8px;background:#f5f6f6"></div>
<div class="abs" style="left:515px;top:721px;width:8px;height:8px;background:#f5f6f6"></div>
<div class="abs" style="left:362px;top:729px;width:9px;height:9px;background:#e9ecec"></div>
<div class="abs" style="left:371px;top:729px;width:9px;height:9px;background:#e9ecec"></div>
<div class="abs" style="left:380px;top:729px;width:9px;height:9px;background:#e9ecec"></div>
<div class="abs" style="left:389px;top:729px;width:9px;height:9px;background:#eceeee"></div>
<div class="abs" style="left:398px;top:729px;width:9px;height:9px;background:#e0e5e3"></div>
<div class="abs" style="left:407px;top:729px;width:9px;height:9px;background:#eceeee"></div>
<div class="abs" style="left:416px;top:729px;width:9px;height:9px;background:#e0e5e3"></div>
<div class="abs" style="left:425px;top:729px;width:9px;height:9px;background:#e3e6e5"></div>
<div class="abs" style="left:434px;top:729px;width:9px;height:9px;background:#e3e6e5"></div>
<div class="abs" style="left:443px;top:729px;width:9px;height:9px;background:#e9ecec"></div>
<div class="abs" style="left:452px;top:729px;width:9px;height:9px;background:#e0e5e3"></div>
<div class="abs" style="left:461px;top:729px;width:9px;height:9px;background:#e3e6e5"></div>
<div class="abs" style="left:470px;top:729px;width:7px;height:9px;background:#e3e6e5"></div>
<div class="abs" style="left:362px;top:738px;width:9px;height:9px;background:#f4f5f6"></div>
<div class="abs" style="left:371px;top:738px;width:9px;height:9px;background:#f6f6f7"></div>
<div class="abs" style="left:380px;top:738px;width:9px;height:9px;background:#f1f3f3"></div>
<div class="abs" style="left:389px;top:738px;width:9px;height:9px;background:#f4f5f6"></div>
<div class="abs" style="left:398px;top:738px;width:9px;height:9px;background:#f1f3f3"></div>
<div class="abs" style="left:407px;top:738px;width:9px;height:9px;background:#f4f5f6"></div>
<div class="abs" style="left:416px;top:738px;width:9px;height:9px;background:#f0f2f3"></div>
<div class="abs" style="left:425px;top:738px;width:9px;height:9px;background:#f1f3f3"></div>
<div class="abs" style="left:434px;top:738px;width:9px;height:9px;background:#f4f5f6"></div>
<div class="abs" style="left:443px;top:738px;width:9px;height:9px;background:#eef0f2"></div>
<div class="abs" style="left:452px;top:738px;width:9px;height:9px;background:#f6f6f7"></div>
<div class="abs" style="left:461px;top:738px;width:9px;height:9px;background:#f0f2f3"></div>
<div class="abs" style="left:470px;top:738px;width:7px;height:9px;background:#f1f3f3"></div>
<div class="abs" style="left:108px;top:768px;width:9px;height:9px;background:#d3d8d4"></div>
<div class="abs" style="left:117px;top:768px;width:9px;height:9px;background:#e2e5e6"></div>
<div class="abs" style="left:126px;top:768px;width:9px;height:9px;background:#d8dedb"></div>
<div class="abs" style="left:135px;top:768px;width:9px;height:9px;background:#dfe3e0"></div>
<div class="abs" style="left:144px;top:768px;width:9px;height:9px;background:#e2e5e6"></div>
<div class="abs" style="left:153px;top:768px;width:9px;height:9px;background:#d2e4ee"></div>
<div class="abs" style="left:162px;top:768px;width:9px;height:9px;background:#d2e4ee"></div>
<div class="abs" style="left:171px;top:768px;width:9px;height:9px;background:#cdd9d4"></div>
<div class="abs" style="left:180px;top:768px;width:9px;height:9px;background:#c9d3cd"></div>
<div class="abs" style="left:189px;top:768px;width:9px;height:9px;background:#dfe3e0"></div>
<div class="abs" style="left:198px;top:768px;width:9px;height:9px;background:#cdd9d4"></div>
<div class="abs" style="left:207px;top:768px;width:9px;height:9px;background:#d2e4ee"></div>
<div class="abs" style="left:216px;top:768px;width:7px;height:9px;background:#e6e9eb"></div>
<div class="abs" style="left:362px;top:765px;width:9px;height:8px;background:#e9ecec"></div>
<div class="abs" style="left:371px;top:765px;width:9px;height:8px;background:#dde2df"></div>
<div class="abs" style="left:380px;top:765px;width:9px;height:8px;background:#e0e5e3"></div>
<div class="abs" style="left:389px;top:765px;width:9px;height:8px;background:#eceeee"></div>
<div class="abs" style="left:398px;top:765px;width:9px;height:8px;background:#e9ecec"></div>
<div class="abs" style="left:407px;top:765px;width:9px;height:8px;background:#e0e5e3"></div>
<div class="abs" style="left:416px;top:765px;width:9px;height:8px;background:#e9ecec"></div>
<div class="abs" style="left:425px;top:765px;width:9px;height:8px;background:#e0e5e3"></div>
<div class="abs" style="left:434px;top:765px;width:9px;height:8px;background:#dde2df"></div>
<div class="abs" style="left:443px;top:765px;width:9px;height:8px;background:#dde2df"></div>
<div class="abs" style="left:452px;top:765px;width:9px;height:8px;background:#e3e6e5"></div>
<div class="abs" style="left:461px;top:765px;width:7px;height:8px;background:#dde2df"></div>
<div class="abs" style="left:362px;top:773px;width:9px;height:9px;background:#eef0f2"></div>
<div class="abs" style="left:371px;top:773px;width:9px;height:9px;background:#eef0f2"></div>
<div class="abs" style="left:380px;top:773px;width:9px;height:9px;background:#eef0f2"></div>
<div class="abs" style="left:389px;top:773px;width:9px;height:9px;background:#f0f2f3"></div>
<div class="abs" style="left:398px;top:773px;width:9px;height:9px;background:#f1f3f3"></div>
<div class="abs" style="left:407px;top:773px;width:9px;height:9px;background:#f6f6f7"></div>
<div class="abs" style="left:416px;top:773px;width:9px;height:9px;background:#eef0f2"></div>
<div class="abs" style="left:425px;top:773px;width:9px;height:9px;background:#f4f5f6"></div>
<div class="abs" style="left:434px;top:773px;width:9px;height:9px;background:#f4f5f6"></div>
<div class="abs" style="left:443px;top:773px;width:9px;height:9px;background:#f0f2f3"></div>
<div class="abs" style="left:452px;top:773px;width:9px;height:9px;background:#eef0f2"></div>
<div class="abs" style="left:461px;top:773px;width:7px;height:9px;background:#f1f3f3"></div>
<div class="abs" style="left:362px;top:782px;width:9px;height:9px;background:#f5f6f6"></div>
<div class="abs" style="left:371px;top:782px;width:9px;height:9px;background:#f7f7f8"></div>
<div class="abs" style="left:380px;top:782px;width:9px;height:9px;background:#f5f6f6"></div>
<div class="abs" style="left:389px;top:782px;width:9px;height:9px;background:#f5f6f6"></div>
<div class="abs" style="left:398px;top:782px;width:9px;height:9px;background:#f7f7f8"></div>
<div class="abs" style="left:407px;top:782px;width:9px;height:9px;background:#f6f6f7"></div>
<div class="abs" style="left:416px;top:782px;width:9px;height:9px;background:#f5f6f6"></div>
<div class="abs" style="left:425px;top:782px;width:9px;height:9px;background:#f5f6f6"></div>
<div class="abs" style="left:434px;top:782px;width:9px;height:9px;background:#f5f6f6"></div>
<div class="abs" style="left:443px;top:782px;width:9px;height:9px;background:#f5f6f6"></div>
<div class="abs" style="left:452px;top:782px;width:9px;height:9px;background:#f5f6f6"></div>
<div class="abs" style="left:461px;top:782px;width:9px;height:9px;background:#f5f6f6"></div>
<div class="abs" style="left:470px;top:782px;width:9px;height:9px;background:#f6f6f7"></div>
<div class="abs" style="left:479px;top:782px;width:9px;height:9px;background:#f7f7f8"></div>
<div class="abs" style="left:488px;top:782px;width:9px;height:9px;background:#f5f6f6"></div>
<div class="abs" style="left:497px;top:782px;width:9px;height:9px;background:#f5f6f6"></div>
<div class="abs" style="left:506px;top:782px;width:9px;height:9px;background:#f7f7f8"></div>
<div class="abs" style="left:515px;top:782px;width:8px;height:9px;background:#f7f7f8"></div>
<div class="abs" style="left:108px;top:796px;width:9px;height:8px;background:#f1f3f3"></div>
<div class="abs" style="left:117px;top:796px;width:9px;height:8px;background:#f1f3f3"></div>
<div class="abs" style="left:126px;top:796px;width:9px;height:8px;background:#f0f2f3"></div>
<div class="abs" style="left:135px;top:796px;width:9px;height:8px;background:#f1f3f3"></div>
<div class="abs" style="left:144px;top:796px;width:9px;height:8px;background:#f1f3f3"></div>
<div class="abs" style="left:153px;top:796px;width:9px;height:8px;background:#f0f2f3"></div>
<div class="abs" style="left:162px;top:796px;width:9px;height:8px;background:#eef0f2"></div>
<div class="abs" style="left:171px;top:796px;width:9px;height:8px;background:#f0f2f3"></div>
<div class="abs" style="left:180px;top:796px;width:7px;height:8px;background:#eef0f2"></div>
<div class="abs" style="left:108px;top:804px;width:9px;height:9px;background:#cdd9d4"></div>
<div class="abs" style="left:117px;top:804px;width:9px;height:9px;background:#dfe3e0"></div>
<div class="abs" style="left:126px;top:804px;width:9px;height:9px;background:#c9d3cd"></div>
<div class="abs" style="left:135px;top:804px;width:9px;height:9px;background:#efe6d8"></div>
<div class="abs" style="left:144px;top:804px;width:9px;height:9px;background:#c3cfca"></div>
<div class="abs" style="left:153px;top:804px;width:9px;height:9px;background:#d3d8d4"></div>
<div class="abs" style="left:162px;top:804px;width:9px;height:9px;background:#c9d3cd"></div>
<div class="abs" style="left:171px;top:804px;width:9px;height:9px;background:#d3d8d4"></div>
<div class="abs" style="left:180px;top:804px;width:7px;height:9px;background:#c3cfca"></div>
<div class="abs" style="left:362px;top:800px;width:9px;height:9px;background:#dfe3e0"></div>
<div class="abs" style="left:371px;top:800px;width:9px;height:9px;background:#e6e9eb"></div>
<div class="abs" style="left:380px;top:800px;width:9px;height:9px;background:#c9d3cd"></div>
<div class="abs" style="left:389px;top:800px;width:9px;height:9px;background:#efe6d8"></div>
<div class="abs" style="left:398px;top:800px;width:9px;height:9px;background:#c3cfca"></div>
<div class="abs" style="left:407px;top:800px;width:9px;height:9px;background:#d3d8d4"></div>
<div class="abs" style="left:416px;top:800px;width:9px;height:9px;background:#c9d3cd"></div>
<div class="abs" style="left:425px;top:800px;width:9px;height:9px;background:#e2e5e6"></div>
<div class="abs" style="left:434px;top:800px;width:7px;height:9px;background:#c3cfca"></div>
<div class="abs" style="left:362px;top:809px;width:9px;height:8px;background:#f1f3f3"></div>
<div class="abs" style="left:371px;top:809px;width:9px;height:8px;background:#eef0f2"></div>
<div class="abs" style="left:380px;top:809px;width:9px;height:8px;background:#f4f5f6"></div>
<div class="abs" style="left:389px;top:809px;width:9px;height:8px;background:#f4f5f6"></div>
<div class="abs" style="left:398px;top:809px;width:9px;height:8px;background:#f6f6f7"></div>
<div class="abs" style="left:407px;top:809px;width:9px;height:8px;background:#f4f5f6"></div>
<div class="abs" style="left:416px;top:809px;width:9px;height:8px;background:#f1f3f3"></div>
<div class="abs" style="left:425px;top:809px;width:9px;height:8px;background:#f0f2f3"></div>
<div class="abs" style="left:434px;top:809px;width:7px;height:8px;background:#f0f2f3"></div>
<div class="abs" style="left:108px;top:823px;width:9px;height:8px;background:#f7f7f8"></div>
<div class="abs" style="left:117px;top:823px;width:9px;height:8px;background:#f7f7f8"></div>
<div class="abs" style="left:126px;top:823px;width:9px;height:8px;background:#f7f7f8"></div>
<div class="abs" style="left:135px;top:823px;width:9px;height:8px;background:#f7f7f8"></div>
<div class="abs" style="left:144px;top:823px;width:9px;height:8px;background:#f7f7f8"></div>
<div class="abs" style="left:153px;top:823px;width:9px;height:8px;background:#f6f6f7"></div>
<div class="abs" style="left:162px;top:823px;width:9px;height:8px;background:#f6f6f7"></div>
<div class="abs" style="left:171px;top:823px;width:9px;height:8px;background:#f6f6f7"></div>
<div class="abs" style="left:180px;top:823px;width:9px;height:8px;background:#f5f6f6"></div>
<div class="abs" style="left:189px;top:823px;width:9px;height:8px;background:#f7f7f8"></div>
<div class="abs" style="left:198px;top:823px;width:9px;height:8px;background:#f5f6f6"></div>
<div class="abs" style="left:207px;top:823px;width:9px;height:8px;background:#f7f7f8"></div>
<div class="abs" style="left:216px;top:823px;width:9px;height:8px;background:#f7f7f8"></div>
<div class="abs" style="left:225px;top:823px;width:9px;height:8px;background:#f5f6f6"></div>
<div class="abs" style="left:234px;top:823px;width:9px;height:8px;background:#f6f6f7"></div>
<div class="abs" style="left:243px;top:823px;width:9px;height:8px;background:#f5f6f6"></div>
<div class="abs" style="left:252px;top:823px;width:9px;height:8px;background:#f6f6f7"></div>
<div class="abs" style="left:261px;top:823px;width:9px;height:8px;background:#f6f6f7"></div>
<div class="abs" style="left:270px;top:823px;width:9px;height:8px;background:#f5f6f6"></div>
<div class="abs" style="left:279px;top:823px;width:4px;height:8px;background:#f7f7f8"></div>
<div class="abs" style="left:108px;top:830px;width:9px;height:9px;background:#eef0f2"></div>
<div class="abs" style="left:117px;top:830px;width:9px;height:9px;background:#f6f6f7"></div>
<div class="abs" style="left:126px;top:830px;width:9px;height:9px;background:#f0f2f3"></div>
<div class="abs" style="left:135px;top:830px;width:9px;height:9px;background:#f6f6f7"></div>
<div class="abs" style="left:144px;top:830px;width:9px;height:9px;background:#f4f5f6"></div>
<div class="abs" style="left:153px;top:830px;width:9px;height:9px;background:#f0f2f3"></div>
<div class="abs" style="left:162px;top:830px;width:9px;height:9px;background:#f4f5f6"></div>
<div class="abs" style="left:171px;top:830px;width:9px;height:9px;background:#f6f6f7"></div>
<div class="abs" style="left:180px;top:830px;width:7px;height:9px;background:#f4f5f6"></div>
<div class="abs" style="left:108px;top:839px;width:9px;height:9px;background:#dfe3e0"></div>
<div class="abs" style="left:117px;top:839px;width:9px;height:9px;background:#efe6d8"></div>
<div class="abs" style="left:126px;top:839px;width:9px;height:9px;background:#e2e5e6"></div>
<div class="abs" style="left:135px;top:839px;width:9px;height:9px;background:#e6e9eb"></div>
<div class="abs" style="left:144px;top:839px;width:9px;height:9px;background:#e6e9eb"></div>
<div class="abs" style="left:153px;top:839px;width:9px;height:9px;background:#e6e9eb"></div>
<div class="abs" style="left:162px;top:839px;width:9px;height:9px;background:#efe6d8"></div>
<div class="abs" style="left:171px;top:839px;width:9px;height:9px;background:#e2e5e6"></div>
<div class="abs" style="left:180px;top:839px;width:7px;height:9px;background:#c3cfca"></div>
<div class="abs" style="left:362px;top:835px;width:9px;height:9px;background:#e2e5e6"></div>
<div class="abs" style="left:371px;top:835px;width:9px;height:9px;background:#e2e5e6"></div>
<div class="abs" style="left:380px;top:835px;width:9px;height:9px;background:#d2e4ee"></div>
<div class="abs" style="left:389px;top:835px;width:9px;height:9px;background:#e2e5e6"></div>
<div class="abs" style="left:398px;top:835px;width:9px;height:9px;background:#e2e5e6"></div>
<div class="abs" style="left:407px;top:835px;width:9px;height:9px;background:#e6e9eb"></div>
<div class="abs" style="left:416px;top:835px;width:9px;height:9px;background:#cdd9d4"></div>
<div class="abs" style="left:425px;top:835px;width:9px;height:9px;background:#efe6d8"></div>
<div class="abs" style="left:434px;top:835px;width:7px;height:9px;background:#d3d8d4"></div>
<div class="abs" style="left:362px;top:853px;width:9px;height:9px;background:#f6f6f7"></div>
<div class="abs" style="left:371px;top:853px;width:9px;height:9px;background:#f7f7f8"></div>
<div class="abs" style="left:380px;top:853px;width:9px;height:9px;background:#f7f7f8"></div>
<div class="abs" style="left:389px;top:853px;width:9px;height:9px;background:#f7f7f8"></div>
<div class="abs" style="left:398px;top:853px;width:9px;height:9px;background:#f6f6f7"></div>
<div class="abs" style="left:407px;top:853px;width:9px;height:9px;background:#f5f6f6"></div>
<div class="abs" style="left:416px;top:853px;width:9px;height:9px;background:#f5f6f6"></div>
<div class="abs" style="left:425px;top:853px;width:9px;height:9px;background:#f7f7f8"></div>
<div class="abs" style="left:434px;top:853px;width:9px;height:9px;background:#f7f7f8"></div>
<div class="abs" style="left:443px;top:853px;width:9px;height:9px;background:#f5f6f6"></div>
<div class="abs" style="left:452px;top:853px;width:9px;height:9px;background:#f7f7f8"></div>
<div class="abs" style="left:461px;top:853px;width:9px;height:9px;background:#f7f7f8"></div>
<div class="abs" style="left:470px;top:853px;width:9px;height:9px;background:#f6f6f7"></div>
<div class="abs" style="left:479px;top:853px;width:9px;height:9px;background:#f6f6f7"></div>
<div class="abs" style="left:488px;top:853px;width:9px;height:9px;background:#f6f6f7"></div>
<div class="abs" style="left:497px;top:853px;width:9px;height:9px;background:#f6f6f7"></div>
<div class="abs" style="left:506px;top:853px;width:9px;height:9px;background:#f7f7f8"></div>
<div class="abs" style="left:515px;top:853px;width:8px;height:9px;background:#f6f6f7"></div>
<div class="abs" style="left:108px;top:857px;width:9px;height:8px;background:#f7f7f8"></div>
<div class="abs" style="left:117px;top:857px;width:9px;height:8px;background:#f6f6f7"></div>
<div class="abs" style="left:126px;top:857px;width:9px;height:8px;background:#f7f7f8"></div>
<div class="abs" style="left:135px;top:857px;width:9px;height:8px;background:#f5f6f6"></div>
<div class="abs" style="left:144px;top:857px;width:9px;height:8px;background:#f5f6f6"></div>
<div class="abs" style="left:153px;top:857px;width:9px;height:8px;background:#f6f6f7"></div>
<div class="abs" style="left:162px;top:857px;width:9px;height:8px;background:#f7f7f8"></div>
<div class="abs" style="left:171px;top:857px;width:9px;height:8px;background:#f5f6f6"></div>
<div class="abs" style="left:180px;top:857px;width:9px;height:8px;background:#f7f7f8"></div>
<div class="abs" style="left:189px;top:857px;width:9px;height:8px;background:#f5f6f6"></div>
<div class="abs" style="left:198px;top:857px;width:9px;height:8px;background:#f6f6f7"></div>
<div class="abs" style="left:207px;top:857px;width:9px;height:8px;background:#f5f6f6"></div>
<div class="abs" style="left:216px;top:857px;width:9px;height:8px;background:#f6f6f7"></div>
<div class="abs" style="left:225px;top:857px;width:9px;height:8px;background:#f7f7f8"></div>
<div class="abs" style="left:234px;top:857px;width:9px;height:8px;background:#f5f6f6"></div>
<div class="abs" style="left:243px;top:857px;width:9px;height:8px;background:#f6f6f7"></div>
<div class="abs" style="left:252px;top:857px;width:9px;height:8px;background:#f7f7f8"></div>
<div class="abs" style="left:261px;top:857px;width:9px;height:8px;background:#f6f6f7"></div>
<div class="abs" style="left:270px;top:857px;width:9px;height:8px;background:#f7f7f8"></div>
<div class="abs" style="left:279px;top:857px;width:4px;height:8px;background:#f5f6f6"></div>
<div class="abs" style="left:108px;top:866px;width:9px;height:9px;background:#efe6d8"></div>
<div class="abs" style="left:117px;top:866px;width:9px;height:9px;background:#c9d3cd"></div>
<div class="abs" style="left:126px;top:866px;width:9px;height:9px;background:#d2e4ee"></div>
<div class="abs" style="left:135px;top:866px;width:9px;height:9px;background:#cdd9d4"></div>
<div class="abs" style="left:144px;top:866px;width:9px;height:9px;background:#d2e4ee"></div>
<div class="abs" style="left:153px;top:866px;width:9px;height:9px;background:#c9d3cd"></div>
<div class="abs" style="left:162px;top:866px;width:9px;height:9px;background:#dfe3e0"></div>
<div class="abs" style="left:171px;top:866px;width:9px;height:9px;background:#dfe3e0"></div>
<div class="abs" style="left:180px;top:866px;width:9px;height:9px;background:#dfe3e0"></div>
<div class="abs" style="left:189px;top:866px;width:9px;height:9px;background:#d3d8d4"></div>
<div class="abs" style="left:198px;top:866px;width:9px;height:9px;background:#dfe3e0"></div>
<div class="abs" style="left:207px;top:866px;width:9px;height:9px;background:#c3cfca"></div>
<div class="abs" style="left:216px;top:866px;width:9px;height:9px;background:#cdd9d4"></div>
<div class="abs" style="left:225px;top:866px;width:9px;height:9px;background:#dfe3e0"></div>
<div class="abs" style="left:234px;top:866px;width:9px;height:9px;background:#c3cfca"></div>
<div class="abs" style="left:243px;top:866px;width:6px;height:9px;background:#c3cfca"></div>
<div class="abs" style="left:108px;top:874px;width:9px;height:9px;background:#f1f3f3"></div>
<div class="abs" style="left:117px;top:874px;width:9px;height:9px;background:#f4f5f6"></div>
<div class="abs" style="left:126px;top:874px;width:9px;height:9px;background:#eef0f2"></div>
<div class="abs" style="left:135px;top:874px;width:9px;height:9px;background:#f6f6f7"></div>
<div class="abs" style="left:144px;top:874px;width:9px;height:9px;background:#f6f6f7"></div>
<div class="abs" style="left:153px;top:874px;width:9px;height:9px;background:#eef0f2"></div>
<div class="abs" style="left:162px;top:874px;width:9px;height:9px;background:#f0f2f3"></div>
<div class="abs" style="left:171px;top:874px;width:9px;height:9px;background:#f0f2f3"></div>
<div class="abs" style="left:180px;top:874px;width:9px;height:9px;background:#f0f2f3"></div>
<div class="abs" style="left:189px;top:874px;width:9px;height:9px;background:#f6f6f7"></div>
<div class="abs" style="left:198px;top:874px;width:9px;height:9px;background:#eef0f2"></div>
<div class="abs" style="left:207px;top:874px;width:9px;height:9px;background:#f1f3f3"></div>
<div class="abs" style="left:216px;top:874px;width:9px;height:9px;background:#eef0f2"></div>
<div class="abs" style="left:225px;top:874px;width:9px;height:9px;background:#eef0f2"></div>
<div class="abs" style="left:234px;top:874px;width:9px;height:9px;background:#f0f2f3"></div>
<div class="abs" style="left:243px;top:874px;width:6px;height:9px;background:#f4f5f6"></div>
<div class="abs" style="left:108px;top:883px;width:9px;height:9px;background:#f6f6f7"></div>
<div class="abs" style="left:117px;top:883px;width:9px;height:9px;background:#f7f7f8"></div>
<div class="abs" style="left:126px;top:883px;width:9px;height:9px;background:#f5f6f6"></div>
<div class="abs" style="left:135px;top:883px;width:9px;height:9px;background:#f6f6f7"></div>
<div class="abs" style="left:144px;top:883px;width:9px;height:9px;background:#f5f6f6"></div>
<div class="abs" style="left:153px;top:883px;width:9px;height:9px;background:#f7f7f8"></div>
<div class="abs" style="left:162px;top:883px;width:9px;height:9px;background:#f7f7f8"></div>
<div class="abs" style="left:171px;top:883px;width:9px;height:9px;background:#f5f6f6"></div>
<div class="abs" style="left:180px;top:883px;width:9px;height:9px;background:#f7f7f8"></div>
<div class="abs" style="left:189px;top:883px;width:9px;height:9px;background:#f6f6f7"></div>
<div class="abs" style="left:198px;top:883px;width:9px;height:9px;background:#f6f6f7"></div>
<div class="abs" style="left:207px;top:883px;width:9px;height:9px;background:#f5f6f6"></div>
<div class="abs" style="left:216px;top:883px;width:9px;height:9px;background:#f7f7f8"></div>
<div class="abs" style="left:225px;top:883px;width:9px;height:9px;background:#f7f7f8"></div>
<div class="abs" style="left:234px;top:883px;width:9px;height:9px;background:#f5f6f6"></div>
<div class="abs" style="left:243px;top:883px;width:9px;height:9px;background:#f5f6f6"></div>
<div class="abs" style="left:252px;top:883px;width:9px;height:9px;background:#f5f6f6"></div>
<div class="abs" style="left:261px;top:883px;width:9px;height:9px;background:#f7f7f8"></div>
<div class="abs" style="left:270px;top:883px;width:9px;height:9px;background:#f5f6f6"></div>
<div class="abs" style="left:279px;top:883px;width:4px;height:9px;background:#f6f6f7"></div>
<div class="abs" style="left:362px;top:870px;width:9px;height:9px;background:#e6e9eb"></div>
<div class="abs" style="left:371px;top:870px;width:9px;height:9px;background:#dfe3e0"></div>
<div class="abs" style="left:380px;top:870px;width:9px;height:9px;background:#e6e9eb"></div>
<div class="abs" style="left:389px;top:870px;width:9px;height:9px;background:#e6e9eb"></div>
<div class="abs" style="left:398px;top:870px;width:9px;height:9px;background:#d3d8d4"></div>
<div class="abs" style="left:407px;top:870px;width:9px;height:9px;background:#cdd9d4"></div>
<div class="abs" style="left:416px;top:870px;width:9px;height:9px;background:#dfe3e0"></div>
<div class="abs" style="left:425px;top:870px;width:9px;height:9px;background:#c3cfca"></div>
<div class="abs" style="left:434px;top:870px;width:9px;height:9px;background:#d3d8d4"></div>
<div class="abs" style="left:443px;top:870px;width:9px;height:9px;background:#dfe3e0"></div>
<div class="abs" style="left:452px;top:870px;width:9px;height:9px;background:#dfe3e0"></div>
<div class="abs" style="left:461px;top:870px;width:9px;height:9px;background:#dfe3e0"></div>
<div class="abs" style="left:470px;top:870px;width:9px;height:9px;background:#cdd9d4"></div>
<div class="abs" style="left:479px;top:870px;width:9px;height:9px;background:#c3cfca"></div>
<div class="abs" style="left:488px;top:870px;width:9px;height:9px;background:#c9d3cd"></div>
<div class="abs" style="left:497px;top:870px;width:6px;height:9px;background:#e6e9eb"></div>
<div class="abs" style="left:108px;top:901px;width:9px;height:9px;background:#d3d8d4"></div>
<div class="abs" style="left:117px;top:901px;width:9px;height:9px;background:#efe6d8"></div>
<div class="abs" style="left:126px;top:901px;width:9px;height:9px;background:#e6e9eb"></div>
<div class="abs" style="left:135px;top:901px;width:9px;height:9px;background:#e6e9eb"></div>
<div class="abs" style="left:144px;top:901px;width:9px;height:9px;background:#e6e9eb"></div>
<div class="abs" style="left:153px;top:901px;width:9px;height:9px;background:#cdd9d4"></div>
<div class="abs" style="left:162px;top:901px;width:9px;height:9px;background:#c9d3cd"></div>
<div class="abs" style="left:171px;top:901px;width:9px;height:9px;background:#e6e9eb"></div>
<div class="abs" style="left:180px;top:901px;width:9px;height:9px;background:#d3d8d4"></div>
<div class="abs" style="left:189px;top:901px;width:9px;height:9px;background:#e2e5e6"></div>
<div class="abs" style="left:198px;top:901px;width:9px;height:9px;background:#e2e5e6"></div>
<div class="abs" style="left:207px;top:901px;width:9px;height:9px;background:#d8dedb"></div>
<div class="abs" style="left:216px;top:901px;width:9px;height:9px;background:#d3d8d4"></div>
<div class="abs" style="left:225px;top:901px;width:9px;height:9px;background:#c9d3cd"></div>
<div class="abs" style="left:234px;top:901px;width:9px;height:9px;background:#e6e9eb"></div>
<div class="abs" style="left:243px;top:901px;width:9px;height:9px;background:#cdd9d4"></div>
<div class="abs" style="left:252px;top:901px;width:9px;height:9px;background:#e6e9eb"></div>
<div class="abs" style="left:261px;top:901px;width:5px;height:9px;background:#d3d8d4"></div>
<div class="abs" style="left:108px;top:909px;width:9px;height:6px;background:#f0f2f3"></div>
<div class="abs" style="left:117px;top:909px;width:9px;height:6px;background:#f1f3f3"></div>
<div class="abs" style="left:126px;top:909px;width:9px;height:6px;background:#f4f5f6"></div>
<div class="abs" style="left:135px;top:909px;width:9px;height:6px;background:#f6f6f7"></div>
<div class="abs" style="left:144px;top:909px;width:9px;height:6px;background:#f6f6f7"></div>
<div class="abs" style="left:153px;top:909px;width:9px;height:6px;background:#f6f6f7"></div>
<div class="abs" style="left:162px;top:909px;width:9px;height:6px;background:#f6f6f7"></div>
<div class="abs" style="left:171px;top:909px;width:9px;height:6px;background:#eef0f2"></div>
<div class="abs" style="left:180px;top:909px;width:9px;height:6px;background:#f4f5f6"></div>
<div class="abs" style="left:189px;top:909px;width:9px;height:6px;background:#f1f3f3"></div>
<div class="abs" style="left:198px;top:909px;width:9px;height:6px;background:#f6f6f7"></div>
<div class="abs" style="left:207px;top:909px;width:9px;height:6px;background:#f6f6f7"></div>
<div class="abs" style="left:216px;top:909px;width:9px;height:6px;background:#f1f3f3"></div>
<div class="abs" style="left:225px;top:909px;width:9px;height:6px;background:#f6f6f7"></div>
<div class="abs" style="left:234px;top:909px;width:9px;height:6px;background:#eef0f2"></div>
<div class="abs" style="left:243px;top:909px;width:9px;height:6px;background:#f6f6f7"></div>
<div class="abs" style="left:252px;top:909px;width:9px;height:6px;background:#f4f5f6"></div>
<div class="abs" style="left:261px;top:909px;width:5px;height:6px;background:#f6f6f7"></div>
<div class="abs" style="left:469px;top:898px;width:9px;height:8px;background:#eef0f2"></div>
<div class="abs" style="left:478px;top:898px;width:9px;height:8px;background:#f1f3f3"></div>
<div class="abs" style="left:487px;top:898px;width:9px;height:8px;background:#eef0f2"></div>
<div class="abs" style="left:496px;top:898px;width:9px;height:8px;background:#f1f3f3"></div>
<div class="abs" style="left:505px;top:898px;width:9px;height:8px;background:#f0f2f3"></div>
<div class="abs" style="left:514px;top:898px;width:7px;height:8px;background:#f1f3f3"></div>
<div class="abs" style="left:362px;top:906px;width:9px;height:9px;background:#cdd9d4"></div>
<div class="abs" style="left:371px;top:906px;width:9px;height:9px;background:#efe6d8"></div>
<div class="abs" style="left:380px;top:906px;width:9px;height:9px;background:#c9d3cd"></div>
<div class="abs" style="left:389px;top:906px;width:9px;height:9px;background:#e2e5e6"></div>
<div class="abs" style="left:398px;top:906px;width:9px;height:9px;background:#d2e4ee"></div>
<div class="abs" style="left:407px;top:906px;width:9px;height:9px;background:#c9d3cd"></div>
<div class="abs" style="left:416px;top:906px;width:9px;height:9px;background:#e2e5e6"></div>
<div class="abs" style="left:425px;top:906px;width:9px;height:9px;background:#d8dedb"></div>
<div class="abs" style="left:434px;top:906px;width:9px;height:9px;background:#c9d3cd"></div>
<div class="abs" style="left:443px;top:906px;width:9px;height:9px;background:#dfe3e0"></div>
<div class="abs" style="left:452px;top:906px;width:9px;height:9px;background:#efe6d8"></div>
<div class="abs" style="left:461px;top:906px;width:9px;height:9px;background:#dfe3e0"></div>
<div class="abs" style="left:470px;top:906px;width:9px;height:9px;background:#d8dedb"></div>
<div class="abs" style="left:479px;top:906px;width:9px;height:9px;background:#dfe3e0"></div>
<div class="abs" style="left:488px;top:906px;width:9px;height:9px;background:#cdd9d4"></div>
<div class="abs" style="left:497px;top:906px;width:9px;height:9px;background:#e2e5e6"></div>
<div class="abs" style="left:506px;top:906px;width:9px;height:9px;background:#c9d3cd"></div>
<div class="abs" style="left:515px;top:906px;width:6px;height:9px;background:#d2e4ee"></div>
<div class="abs" style="left:60px;top:930px;width:1860px;height:7px;background:#f3f6fd"></div>
</body></html>
